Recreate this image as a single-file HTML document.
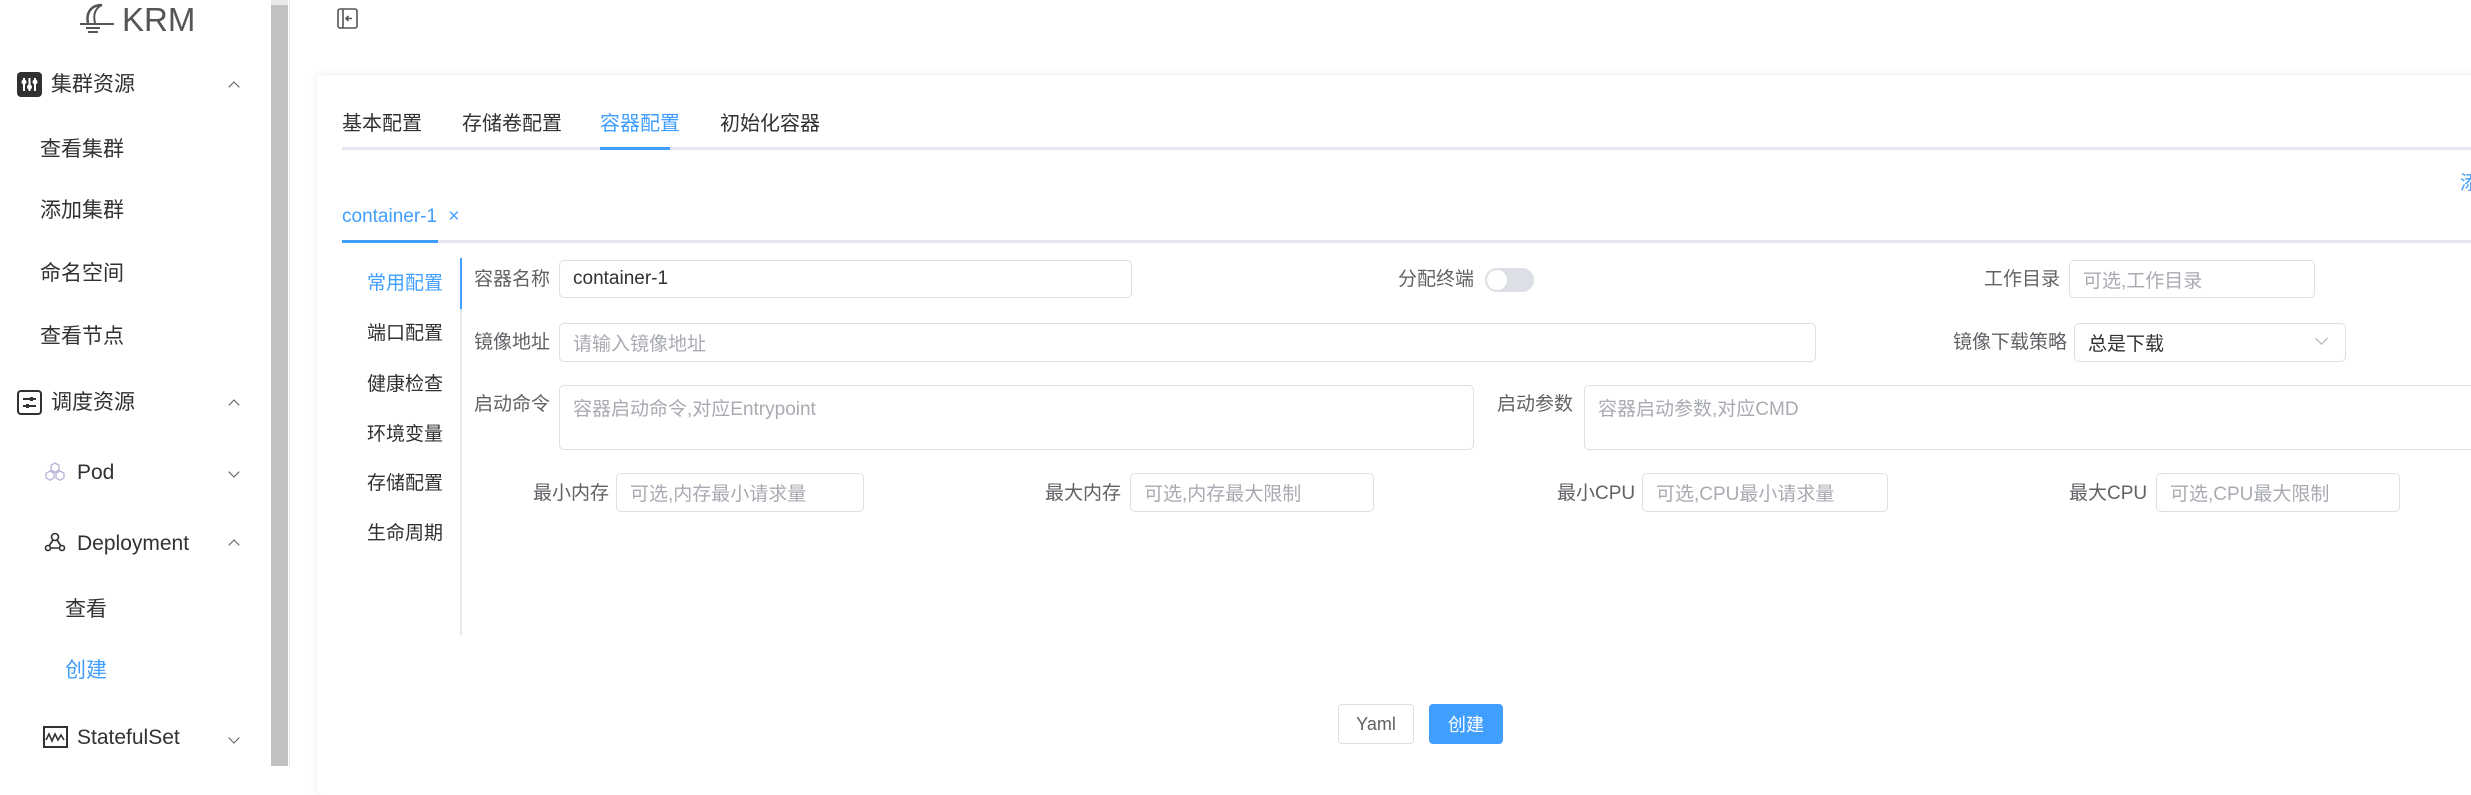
<!DOCTYPE html>
<html><head><meta charset="utf-8"><style>
*{margin:0;padding:0;box-sizing:border-box}
body{width:2471px;height:766px;overflow:hidden;background:#fff;font-family:"Liberation Sans","Noto Sans CJK SC",sans-serif;color:#303133;position:relative}
.a{position:absolute;white-space:nowrap}
.m{font-size:21px;color:#303133;line-height:24px}
.chev{position:absolute;left:230px;width:8px;height:8px;border-left:1.4px solid #555;border-top:1.4px solid #555}
.up{transform:rotate(45deg)}
.dn{transform:rotate(225deg)}
.lbl{font-size:19px;color:#606266;line-height:22px}
.in{position:absolute;border:1.5px solid #dcdfe6;border-radius:5px;background:#fff;font-size:19px;color:#a8abb2;padding-left:13px;display:flex;align-items:center}
.ta{align-items:flex-start;padding-top:8px}
.tab{font-size:20px;line-height:24px;color:#303133}
.vt{font-size:19px;color:#303133;line-height:22px}
</style></head><body>
<div class="a" style="left:0;top:0;width:270px;height:766px;background:#fff"></div>
<div class="a" style="left:271px;top:0;width:17px;height:766px;background:#c1c1c1"></div>
<div class="a" style="left:271px;top:0;width:17px;height:5px;background:#e8e8e8"></div>
<div class="a" style="left:289px;top:0;width:1px;height:766px;background:#e4e4e4"></div>
<svg class="a" style="left:78px;top:2px" width="36" height="32" viewBox="0 0 36 32"><path d="M24 3 C12 3 8 12 10 21" fill="none" stroke="#555" stroke-width="2.5"/><path d="M24 3 C17 6 15 13 17 21" fill="none" stroke="#555" stroke-width="2"/><line x1="2" y1="22" x2="36" y2="22" stroke="#555" stroke-width="2"/><line x1="8" y1="26" x2="22" y2="26" stroke="#555" stroke-width="2"/><line x1="10" y1="30" x2="20" y2="30" stroke="#555" stroke-width="2"/></svg>
<div class="a" style="left:122px;top:2px;font-size:33px;color:#555;line-height:36px">KRM</div>

<div class="a" style="left:17px;top:72px;width:25px;height:25px;background:#303133;border-radius:4px"></div>
<svg class="a" style="left:17px;top:72px" width="25" height="25"><g stroke="#fff" stroke-width="2"><line x1="7" y1="6" x2="7" y2="19"/><line x1="12.5" y1="6" x2="12.5" y2="19"/><line x1="18" y1="6" x2="18" y2="19"/></g><g fill="#fff"><circle cx="7" cy="10" r="2.5"/><circle cx="12.5" cy="15" r="2.5"/><circle cx="18" cy="10" r="2.5"/></g></svg>
<div class="a m" style="left:51px;top:73px">集群资源</div><div class="chev up" style="top:83px"></div>
<div class="a m" style="left:40px;top:138px">查看集群</div>
<div class="a m" style="left:40px;top:199px">添加集群</div>
<div class="a m" style="left:40px;top:262px">命名空间</div>
<div class="a m" style="left:40px;top:325px">查看节点</div>
<div class="a" style="left:17px;top:390px;width:25px;height:25px;border:2.5px solid #303133;border-radius:4px"></div>
<svg class="a" style="left:17px;top:390px" width="25" height="25"><g stroke="#303133" stroke-width="2"><line x1="6" y1="9" x2="19" y2="9"/><line x1="6" y1="16" x2="19" y2="16"/></g><rect x="13" y="7" width="3" height="4" fill="#303133"/><rect x="9" y="14" width="3" height="4" fill="#303133"/></svg>
<div class="a m" style="left:51px;top:391px">调度资源</div><div class="chev up" style="top:401px"></div>
<svg class="a" style="left:42px;top:462px" width="26" height="22" viewBox="0 0 26 22" fill="none" stroke="#b9b2d6" stroke-width="1.3"><path d="M13 1l4 2.3v4.6L13 10.2 9 7.9V3.3z"/><path d="M8 9l4 2.3v4.6L8 18.2 4 15.9v-4.6z"/><path d="M18 9l4 2.3v4.6L18 18.2 14 15.9v-4.6z"/></svg>
<div class="a m" style="left:77px;top:461px">Pod</div><div class="chev dn" style="top:468px"></div>
<svg class="a" style="left:44px;top:532px" width="22" height="20" viewBox="0 0 22 20" fill="none" stroke="#303133" stroke-width="1.6"><circle cx="11" cy="5" r="3.5"/><circle cx="4" cy="16" r="2.5"/><circle cx="18" cy="16" r="2.5"/><path d="M9 8l-4 6M13 8l4 6M7 16h8"/></svg>
<div class="a m" style="left:77px;top:532px">Deployment</div><div class="chev up" style="top:541px"></div>
<div class="a m" style="left:65px;top:598px">查看</div>
<div class="a m" style="left:65px;top:659px;color:#409eff">创建</div>
<svg class="a" style="left:43px;top:726px" width="25" height="22" viewBox="0 0 25 22" fill="none" stroke="#303133" stroke-width="2"><rect x="1" y="1" width="23" height="20"/><path d="M3 14l3-6 3 7 3-7 3 6 3-5 3 5" stroke-width="1.6"/></svg>
<div class="a m" style="left:77px;top:726px">StatefulSet</div><div class="chev dn" style="top:734px"></div>

<svg class="a" style="left:337px;top:8px" width="21" height="21" viewBox="0 0 21 21" fill="none" stroke="#555" stroke-width="1.6"><rect x="1" y="1" width="19" height="19" rx="2"/><line x1="6" y1="1" x2="6" y2="20"/><path d="M15 10.5H9M11.5 8l-2.5 2.5 2.5 2.5"/></svg>

<div class="a" style="left:317px;top:75px;width:2200px;height:720px;background:#fff;border-radius:6px;box-shadow:0 0 10px rgba(0,0,0,0.08)"></div>

<div class="a tab" style="left:342px;top:112px">基本配置</div>
<div class="a tab" style="left:462px;top:112px">存储卷配置</div>
<div class="a tab" style="left:600px;top:112px;color:#409eff">容器配置</div>
<div class="a tab" style="left:720px;top:112px">初始化容器</div>
<div class="a" style="left:342px;top:147px;width:2129px;height:3px;background:#e4e7ed"></div>
<div class="a" style="left:600px;top:147px;width:70px;height:3px;background:#409eff"></div>
<div class="a" style="left:2460px;top:168px;font-size:19px;color:#409eff">添加</div>

<div class="a" style="left:342px;top:206px;font-size:19px;color:#409eff;line-height:22px">container-1 <span style="margin-left:6px">×</span></div>
<div class="a" style="left:342px;top:240px;width:2129px;height:3px;background:#e4e7ed"></div>
<div class="a" style="left:342px;top:240px;width:96px;height:3px;background:#409eff"></div>

<div class="a" style="left:460px;top:258px;width:2px;height:377px;background:#e4e7ed"></div>
<div class="a" style="left:460px;top:258px;width:2px;height:51px;background:#409eff"></div>
<div class="a vt" style="left:367px;top:273px;color:#409eff">常用配置</div>
<div class="a vt" style="left:367px;top:323px">端口配置</div>
<div class="a vt" style="left:367px;top:374px">健康检查</div>
<div class="a vt" style="left:367px;top:424px">环境变量</div>
<div class="a vt" style="left:367px;top:473px">存储配置</div>
<div class="a vt" style="left:367px;top:523px">生命周期</div>

<div class="a lbl" style="left:474px;top:269px">容器名称</div>
<div class="in" style="left:559px;top:260px;width:573px;height:38px;color:#303133">container-1</div>
<div class="a lbl" style="left:1398px;top:269px">分配终端</div>
<div class="a" style="left:1485px;top:268px;width:49px;height:24px;border-radius:12px;background:#dcdfe6"></div>
<div class="a" style="left:1487px;top:270px;width:20px;height:20px;border-radius:10px;background:#fff"></div>
<div class="a lbl" style="left:1984px;top:269px">工作目录</div>
<div class="in" style="left:2069px;top:260px;width:246px;height:38px">可选,工作目录</div>

<div class="a lbl" style="left:474px;top:332px">镜像地址</div>
<div class="in" style="left:559px;top:323px;width:1257px;height:39px">请输入镜像地址</div>
<div class="a lbl" style="left:1953px;top:332px">镜像下载策略</div>
<div class="in" style="left:2074px;top:323px;width:272px;height:39px;color:#303133">总是下载</div>
<div class="a" style="left:2317px;top:334px;width:9px;height:9px;border-right:1.3px solid #a8abb2;border-bottom:1.3px solid #a8abb2;transform:rotate(45deg)"></div>

<div class="a lbl" style="left:474px;top:394px">启动命令</div>
<div class="in ta" style="left:559px;top:385px;width:915px;height:65px">容器启动命令,对应Entrypoint</div>
<div class="a lbl" style="left:1497px;top:394px">启动参数</div>
<div class="in ta" style="left:1584px;top:385px;width:950px;height:65px">容器启动参数,对应CMD</div>

<div class="a lbl" style="left:533px;top:483px">最小内存</div>
<div class="in" style="left:616px;top:473px;width:248px;height:39px">可选,内存最小请求量</div>
<div class="a lbl" style="left:1045px;top:483px">最大内存</div>
<div class="in" style="left:1130px;top:473px;width:244px;height:39px">可选,内存最大限制</div>
<div class="a lbl" style="left:1557px;top:483px">最小CPU</div>
<div class="in" style="left:1642px;top:473px;width:246px;height:39px">可选,CPU最小请求量</div>
<div class="a lbl" style="left:2069px;top:483px">最大CPU</div>
<div class="in" style="left:2156px;top:473px;width:244px;height:39px">可选,CPU最大限制</div>

<div class="a" style="left:1338px;top:704px;width:76px;height:40px;border:1.5px solid #dcdfe6;border-radius:4px;font-size:18px;color:#606266;display:flex;align-items:center;justify-content:center">Yaml</div>
<div class="a" style="left:1429px;top:704px;width:74px;height:40px;background:#409eff;border-radius:4px;font-size:18px;color:#fff;display:flex;align-items:center;justify-content:center">创建</div>
</body></html>
